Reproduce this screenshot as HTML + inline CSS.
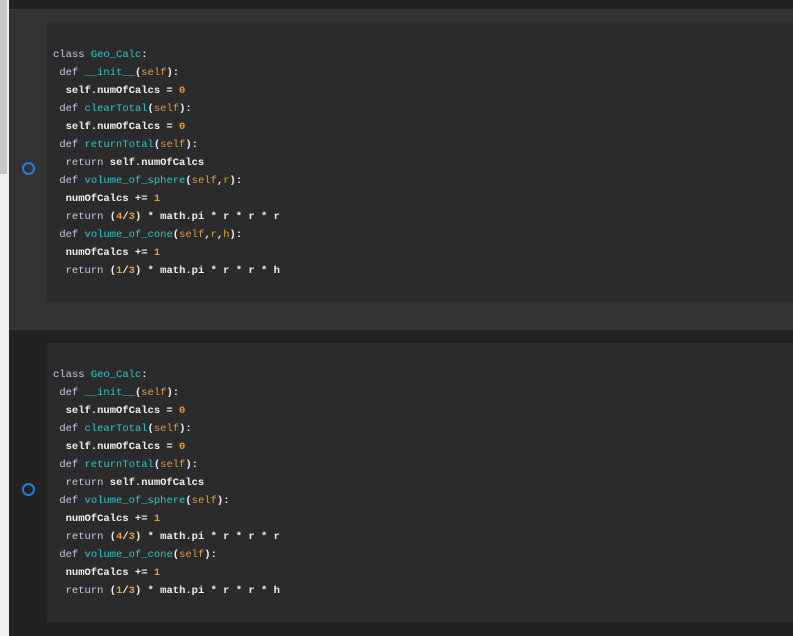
<!DOCTYPE html>
<html><head><style>
*{margin:0;padding:0;box-sizing:border-box}
body{width:793px;height:636px;background:#222;position:relative;overflow:hidden;font-family:"Liberation Mono",monospace}
.lb{position:absolute;left:0;top:0;width:9px;height:636px;background:#f0f0f0}
.sb{position:absolute;left:0;top:0;width:7px;height:174px;background:#c8c8c8}
.cell{position:absolute;left:9px;width:784px}
.code{position:absolute;left:38px;right:0;background:#2b2b2b}
pre{position:absolute;left:6px;top:23px;font-family:"Liberation Mono",monospace;font-size:10.5px;line-height:18px;color:#f0f0f0;font-weight:bold}
.k{color:#c8c8ec;font-weight:normal}.n{color:#22cccc;font-weight:normal}.s{color:#e89a3c;font-weight:normal}.o{color:#e89a3c}
.c{position:absolute;left:13px;width:13px;height:13px;border:2px solid #1e7fe0;border-radius:50%}
</style></head><body>
<div class="lb"></div><div class="sb"></div>
<div class="cell" style="top:9px;height:321px;background:#333">
<div class="code" style="top:14px;height:279px">
<pre><span class="k">class</span> <span class="n">Geo_Calc</span>:
 <span class="k">def</span> <span class="n">__init__</span>(<span class="s">self</span>):
  self.numOfCalcs = <span class="o">0</span>
 <span class="k">def</span> <span class="n">clearTotal</span>(<span class="s">self</span>):
  self.numOfCalcs = <span class="o">0</span>
 <span class="k">def</span> <span class="n">returnTotal</span>(<span class="s">self</span>):
  <span class="k">return</span> self.numOfCalcs
 <span class="k">def</span> <span class="n">volume_of_sphere</span>(<span class="s">self</span>,<span class="s">r</span>):
  numOfCalcs += <span class="o">1</span>
  <span class="k">return</span> (<span class="o">4</span>/<span class="o">3</span>) * math.pi * r * r * r
 <span class="k">def</span> <span class="n">volume_of_cone</span>(<span class="s">self</span>,<span class="s">r</span>,<span class="s">h</span>):
  numOfCalcs += <span class="o">1</span>
  <span class="k">return</span> (<span class="o">1</span>/<span class="o">3</span>) * math.pi * r * r * h</pre>
</div>
<div class="c" style="top:153px"></div>
</div>
<div class="cell" style="top:330px;height:306px;background:#222">
<div class="code" style="top:13px;height:279px">
<pre><span class="k">class</span> <span class="n">Geo_Calc</span>:
 <span class="k">def</span> <span class="n">__init__</span>(<span class="s">self</span>):
  self.numOfCalcs = <span class="o">0</span>
 <span class="k">def</span> <span class="n">clearTotal</span>(<span class="s">self</span>):
  self.numOfCalcs = <span class="o">0</span>
 <span class="k">def</span> <span class="n">returnTotal</span>(<span class="s">self</span>):
  <span class="k">return</span> self.numOfCalcs
 <span class="k">def</span> <span class="n">volume_of_sphere</span>(<span class="s">self</span>):
  numOfCalcs += <span class="o">1</span>
  <span class="k">return</span> (<span class="o">4</span>/<span class="o">3</span>) * math.pi * r * r * r
 <span class="k">def</span> <span class="n">volume_of_cone</span>(<span class="s">self</span>):
  numOfCalcs += <span class="o">1</span>
  <span class="k">return</span> (<span class="o">1</span>/<span class="o">3</span>) * math.pi * r * r * h</pre>
</div>
<div class="c" style="top:153px"></div>
</div>
</body></html>
